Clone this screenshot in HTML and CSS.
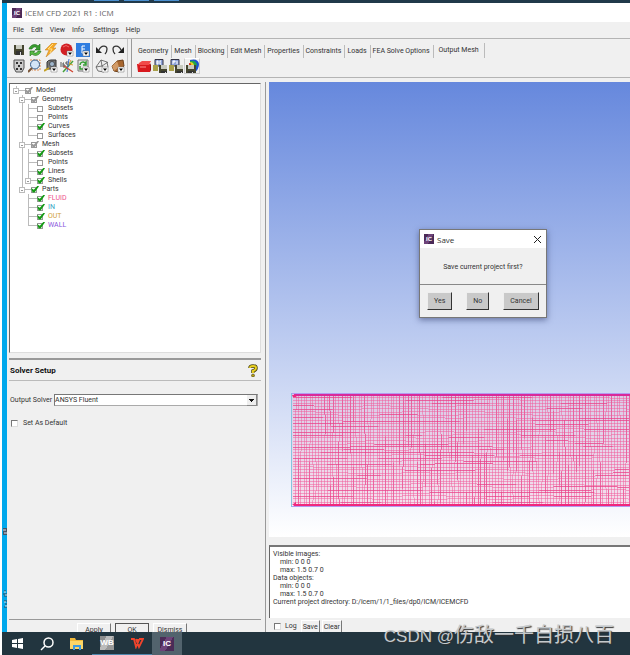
FILE: index.html
```html
<!DOCTYPE html>
<html lang="en">
<head>
<meta charset="UTF-8">
<title>ICEM CFD 2021 R1 : ICM</title>
<link rel="stylesheet" href="styles.css">
</head>
<body>

<svg class="defs" width="0" height="0">
  <symbol id="floppy" viewBox="0 0 14 14">
    <path d="M2 2h10v10H3L2 11z" fill="#45452f"/>
    <path d="M4 2h6v4H4z" fill="#c9cbc0"/>
    <path d="M4 8h6v4H4z" fill="#333"/>
    <path d="M8 9h1v3H8z" fill="#ddd"/>
  </symbol>
  <symbol id="drop" viewBox="0 0 14 14">
    <path d="M7 8h6v5H7z" fill="#fff" stroke="#777" stroke-width=".5"/>
    <path d="M8 9.500h4L10 12z" fill="#000"/>
  </symbol>
</svg>

<div class="desktop-top"><i></i><i></i><i></i></div>

<div class="desktop">
  <div class="desktop-edge">
    <svg width="5" height="8" viewBox="0 0 5 8"><path d="M1 0h4v7H1z" fill="#456"/><path d="M1 2h3M2 5h3" stroke="#dde"/></svg>
    <svg width="5" height="19" viewBox="0 0 5 19"><path d="M2 1h2M1 4h4M2 6h3M2 11h3M3 14h2M2 17h3" stroke="#345"/><path d="M2 2h2M3 5h2M2 12h2M3 16h2" stroke="#cde"/></svg>
  </div>

  <div class="window">
    <div class="titlebar"><span class="logo">IC</span>ICEM CFD 2021 R1 : ICM</div>

    <nav class="menu">
      <a href="#">File</a><a href="#">Edit</a><a href="#">View</a><a href="#">Info</a><a href="#" class="wide">Settings</a><a href="#">Help</a>
    </nav>

    <div class="toolbars">
      <div class="tools tools-main">
        <button aria-label="Save project"><svg viewBox="0 0 14 14"><use href="#floppy"/></svg></button>
        <button aria-label="Refresh"><svg viewBox="0 0 14 14"><path d="M1 6c1-4 6-6 9-3l2-2v6H7l2-2C7 3 5 4 4 6z" fill="#3a9e2f" stroke="#1d6a17" stroke-width=".6"/><path d="M13 8c-1 4-6 6-9 3l-2 2V8h5l-2 1c2 2 4 1 5-1z" fill="#58bb45" stroke="#1d6a17" stroke-width=".6"/></svg></button>
        <button aria-label="Compute"><svg viewBox="0 0 14 14"><path d="M8 0h5L9 5h3L2 14l3-7H1z" fill="#f7a823" stroke="#c98b34" stroke-width=".6"/><path d="M9 1 4 6h4l-2 4" fill="none" stroke="#ffe08a"/></svg></button>
        <button aria-label="Stop"><svg viewBox="0 0 14 14"><circle cx="6.500" cy="6.500" r="6" fill="#d21f24"/><path d="M3 4q3-3 6 0" fill="none" stroke="#ee6a6a"/><use href="#drop"/></svg></button>
        <button aria-label="Entities"><svg viewBox="0 0 14 14"><path d="M0 0h14v14H0z" fill="#2f7de0"/><path d="M9 3H6v7h3M6 6h3" fill="none" stroke="#fff"/><use href="#drop"/></svg></button>
        <button aria-label="Fit window"><svg viewBox="0 0 14 14"><path d="M2 1h10v8l-2 4H4L2 9z" fill="#ccc" stroke="#555"/><path d="M4 3h2v2H4zM8 3h2v2H8zM6 6h2v2H6zM4 9h2v2H4zM8 9h2v2H8z" fill="#333"/></svg></button>
        <button aria-label="Zoom box"><svg viewBox="0 0 14 14"><path d="M2 1h10v10H4" fill="none" stroke="#e08a4a" stroke-dasharray="2 1"/><circle cx="7" cy="5.500" r="4.500" fill="#d3e4f6" stroke="#345a86"/><path d="m4 9-4 4" stroke="#7a5638" stroke-width="2"/></svg></button>
        <button aria-label="Measure"><svg viewBox="0 0 14 14"><path d="M3 3q1-2 4-2h5v9H3z" fill="#777" stroke="#333"/><circle cx="8" cy="5" r="2.500" fill="#9fb6cc" stroke="#222" stroke-width=".6"/><path d="M0 12 5 9" stroke="#c4a127" stroke-width="2"/><use href="#drop"/></svg></button>
        <button aria-label="Local coordinates"><svg viewBox="0 0 14 14"><path d="M1 3v5M4 4H3v4h2V6H3M8 3H6v2h2v3H6" fill="none" stroke="#333" stroke-width=".8"/><path d="m3 13 10-11" stroke="#46a13a" stroke-width="1.500"/><path d="M9 0 7 13" stroke="#3b6ed0"/><path d="m4 7 9 6" stroke="#d04532" stroke-width="1.300"/><path d="m11 1-2 4 4 1" fill="none" stroke="#d09a32"/></svg></button>
        <button aria-label="Surface refresh"><svg viewBox="0 0 14 14"><path d="M2 1h10v11H2z" fill="#e4e8e4" stroke="#777"/><path d="M4 6c0-3 4-4 5-2l1-1v3H7M4 7v3h3" fill="none" stroke="#349c32" stroke-width="1.500"/><use href="#drop"/></svg></button>
      </div>
      <div class="tools tools-history">
        <button aria-label="Undo"><svg viewBox="0 0 14 14"><path d="M1 4v6h6z" fill="#222"/><path d="M4 7c2-5 8-5 8-1q0 3-2 5" fill="none" stroke="#333" stroke-width="1.300"/></svg></button>
        <button aria-label="Redo"><svg viewBox="0 0 14 14"><path d="M13 4v6H7z" fill="#222"/><path d="M10 7C8 2 2 2 2 6q0 3 2 5" fill="none" stroke="#333" stroke-width="1.300"/></svg></button>
        <button aria-label="Wireframe"><svg viewBox="0 0 14 14"><path d="M1 8 6 1l6 2 1 5-4 5-6-1zM1 8l6-1 6-4M7 7l-1-6M7 7l2 6" fill="#eee" stroke="#555" stroke-width=".8"/><use href="#drop"/></svg></button>
        <button aria-label="Solid"><svg viewBox="0 0 14 14"><path d="M1 7 6 2l6-1 1 6-5 6-5-1z" fill="#a8672f" stroke="#6f421b"/><path d="m1 7 5-5 2 6-5 4z" fill="#d29b67"/><use href="#drop"/></svg></button>
      </div>

      <div class="notebook">
        <div class="tabs">
          <button>Geometry</button><button>Mesh</button><button>Blocking</button><button>Edit Mesh</button><button>Properties</button><button>Constraints</button><button>Loads</button><button>FEA Solve Options</button><button class="current">Output Mesh</button>
        </div>
        <div class="tab-tools">
          <button aria-label="Select solver"><svg viewBox="0 0 14 14"><path d="M0 5h13v8H1z" fill="#d8191e"/><path d="m2 4 3-2h9l-2 4H1z" fill="#f14a4a"/><path d="M3 8h6" stroke="#ff8f8f"/><path d="m13 6 1-2v7l-1 2z" fill="#8d0d10"/></svg></button>
          <button aria-label="Boundary conditions"><svg viewBox="0 0 14 14"><path d="M2 .500h8V7H2z" fill="#8fa4d8" stroke="#334"/><path d="M4 2v3h1V2zM8 2H7v3h1" fill="none" stroke="#fff"/><path d="M0 6h5v6H0z" fill="#aaa14a"/><svg x="4" y="4" width="11" height="11"><use href="#floppy"/></svg></svg></button>
          <button aria-label="Edit parameters"><svg viewBox="0 0 14 14"><path d="M2 .500h8V7H2z" fill="#8fa4d8" stroke="#334"/><path d="M4 5V2h2v1H4M8 2v3" fill="none" stroke="#fff"/><path d="M0 6h5v6H0z" fill="#aaa14a"/><svg x="4" y="4" width="11" height="11"><use href="#floppy"/></svg></svg></button>
          <button aria-label="Write input" class="raised"><svg viewBox="0 0 14 14"><path d="M5 1q8-2 9 4 0 5-4 8L5 8z" fill="#1b4fd0"/><path d="M5 2q6-1 7 4l-3 5-4-4z" fill="#21a648"/><path d="M5 3q4 0 4 4L6 9z" fill="#e9d126"/><path d="M4 4q3 0 2 4H4z" fill="#d9301f"/><svg x="-1" y="4" width="11" height="11"><use href="#floppy"/></svg></svg></button>
        </div>
      </div>
    </div>

    <main class="work">
      <section class="left">
        <ul class="tree">
          <li><div class="row"><b></b><label><input type="checkbox" class="partial" checked>Model</label></div>
            <ul>
              <li><div class="row"><b></b><label><input type="checkbox" class="partial" checked>Geometry</label></div>
                <ul>
                  <li><div class="row"><label><input type="checkbox">Subsets</label></div></li>
                  <li><div class="row"><label><input type="checkbox">Points</label></div></li>
                  <li><div class="row"><label><input type="checkbox" checked>Curves</label></div></li>
                  <li><div class="row"><label><input type="checkbox">Surfaces</label></div></li>
                </ul>
              </li>
              <li><div class="row"><b></b><label><input type="checkbox" class="partial" checked>Mesh</label></div>
                <ul>
                  <li><div class="row"><label><input type="checkbox" checked>Subsets</label></div></li>
                  <li><div class="row"><label><input type="checkbox">Points</label></div></li>
                  <li><div class="row"><label><input type="checkbox" checked>Lines</label></div></li>
                  <li><div class="row"><b class="closed"></b><label><input type="checkbox" checked>Shells</label></div></li>
                </ul>
              </li>
              <li><div class="row"><b></b><label><input type="checkbox" checked>Parts</label></div>
                <ul>
                  <li><div class="row fluid"><label><input type="checkbox" checked>FLUID</label></div></li>
                  <li><div class="row in"><label><input type="checkbox" checked>IN</label></div></li>
                  <li><div class="row out"><label><input type="checkbox" checked>OUT</label></div></li>
                  <li><div class="row wall"><label><input type="checkbox" checked>WALL</label></div></li>
                </ul>
              </li>
            </ul>
          </li>
        </ul>

        <form class="solver">
          <div class="solver-head">
            <h2>Solver Setup</h2>
            <svg width="10" height="13" viewBox="0 0 10 13"><path d="M2 4q0-2 3-2t3 2q0 2-3 3v2" fill="none" stroke="#4a4310" stroke-width="3.500"/><path d="M2 4q0-2 3-2t3 2q0 2-3 3v2" fill="none" stroke="#e8cf1f" stroke-width="2"/><circle cx="5" cy="11.500" r="1.500" fill="#b59d17" stroke="#4a4310" stroke-width=".6"/></svg>
          </div>
          <div class="field">
            <label for="solver">Output Solver</label>
            <div class="select"><select id="solver"><option>ANSYS Fluent</option></select></div>
          </div>
          <label class="default"><input type="checkbox" class="box">Set As Default</label>
          <div class="actions">
            <button type="button">Apply</button><button type="button" class="ok">OK</button><button type="button">Dismiss</button>
          </div>
        </form>
      </section>

      <section class="right">
        <div class="viewport">
          <svg class="mesh" id="mesh"></svg>
          <div class="dialog" role="dialog" aria-labelledby="dialog-title">
            <div class="dialog-title">
              <span class="logo">IC</span>
              <span id="dialog-title">Save</span>
              <button aria-label="Close"><svg width="7" height="7" viewBox="0 0 7 7"><path d="m0 0 7 7M7 0 0 7" stroke="#222"/></svg></button>
            </div>
            <p>Save current project first?</p>
            <div class="dialog-buttons"><button>Yes</button><button>No</button><button>Cancel</button></div>
          </div>
        </div>
        <pre class="log">Visible images:
    min: 0 0 0
    max: 1.5 0.7 0
Data objects:
    min: 0 0 0
    max: 1.5 0.7 0
Current project directory: D:/icem/1/1_files/dp0/ICM/ICEMCFD</pre>
        <div class="log-bar">
          <label><input type="checkbox" class="box">Log</label><button>Save</button><button>Clear</button>
        </div>
      </section>
    </main>
  </div>
</div>

<footer class="taskbar">
  <button aria-label="Start"><svg width="11" height="11" viewBox="0 0 11 11"><path d="m0 2 5-1v4H0zM6 1l5-1v5H6zM0 6h5v4L0 9zM6 6h5v5l-5-1z" fill="#fff"/></svg></button>
  <button aria-label="Search"><svg width="14" height="14" viewBox="0 0 14 14"><circle cx="8.500" cy="5.500" r="4.500" fill="none" stroke="#fff" stroke-width="1.500"/><path d="m5 9-4 4" stroke="#fff" stroke-width="1.500"/></svg></button>
  <button aria-label="Explorer"><svg width="14" height="12" viewBox="0 0 14 12"><path d="M0 0h5l1 2h7v9H0z" fill="#f0b93a"/><path d="M0 3h13v8H0z" fill="#fbd667"/><path d="M3 7h8v5H9V9H5v3H3z" fill="#3d9be0"/></svg></button>
  <button aria-label="Workbench" class="running"><span class="logo large wb">WB</span></button>
  <button aria-label="WPS" class="running"><svg width="14" height="11" viewBox="0 0 14 11"><path d="M1 1h3l2 8 3-7h-3M6 1l3 8 4-8H9" fill="none" stroke="#f0442c" stroke-width="1.800"/></svg></button>
  <button aria-label="ICEM CFD" class="active"><span class="logo large">IC</span></button>
</footer>

<div class="watermark">CSDN @<span>伤敌一千自损八百</span></div>

<script src="script.js"></script>
</body>
</html>
```

FILE: styles.css
```css
* {
  box-sizing: border-box;
}

body {
  margin: 0;
  padding-left: 2px;
  height: 100vh;
  display: flex;
  flex-direction: column;
  overflow: hidden;
  background: #fff;
  font-family: Roboto, "Liberation Sans", sans-serif;
  font-size: 7px;
  line-height: 9px;
  color: #333;
}

button, select, input {
  margin: 0;
  padding: 0;
  border: 0;
  background: none;
  font: inherit;
  color: inherit;
}

ul, p, h2, pre {
  margin: 0;
  padding: 0;
  list-style: none;
}

svg {
  display: block;
}

.defs {
  position: absolute;
}

.logo {
  width: 10px;
  height: 10px;
  background: linear-gradient(120deg, #4b2a57 30%, #6d4379 30% 60%, #4b2a57 60%);
  font: bold 6px/10px "Liberation Sans", sans-serif;
  text-align: center;
  color: #fff;
}

.logo.large {
  width: 14px;
  height: 14px;
  font-size: 8px;
  line-height: 14px;
}

.logo.wb {
  background: linear-gradient(120deg, #8d8d8d 30%, #bbb 30% 60%, #999 60%);
}

.desktop-top {
  display: flex;
  gap: 5px;
  height: 3px;
  padding-left: 92px;
  background: #20394a;
}

.desktop-top i {
  width: 25px;
  height: 1px;
  background: #4a8fd0;
}

.desktop {
  flex: 1;
  min-height: 0;
  display: flex;
}

.desktop-edge {
  width: 5px;
  background: #00a8ec;
  display: flex;
  flex-direction: column;
  justify-content: flex-end;
  gap: 54px;
  padding-bottom: 23px;
}

.window {
  flex: 1;
  min-width: 0;
  display: flex;
  flex-direction: column;
  background: #f0f0f0;
}

.titlebar {
  display: flex;
  align-items: center;
  gap: 3px;
  height: 19px;
  padding-left: 5px;
  background: #fff;
  font-family: "Open Sans", sans-serif;
  font-size: 8px;
  color: #666;
}

.menu {
  display: flex;
  align-items: center;
  gap: 7px;
  height: 16px;
  padding-left: 6px;
}

.menu a {
  color: inherit;
  text-decoration: none;
}

.menu .wide {
  margin-left: 2px;
}

/* toolbars */

.toolbars {
  display: flex;
  height: 40px;
  border-top: 1px solid #b4b4b4;
  border-bottom: 1px solid #b4b4b4;
}

.tools {
  display: grid;
  grid-auto-rows: 16px;
  align-content: center;
  border-right: 1px solid #c4c4c4;
}

.tools-main {
  grid-template-columns: repeat(5, 16px);
  padding: 0 1px 0 4px;
}

.tools-history {
  grid-template-columns: repeat(2, 16px);
  padding: 0 1px;
}

.tools button, .tab-tools button {
  display: grid;
  place-items: center;
  width: 16px;
  height: 16px;
}

.tools svg, .tab-tools svg {
  width: 14px;
  height: 14px;
}

.notebook {
  flex: 1;
  margin-left: 3px;
  border-left: 1px solid #999;
  padding: 3px 0 0 4px;
}

.tabs {
  display: flex;
  align-items: flex-end;
  height: 16px;
}

.tabs button {
  height: 13px;
  padding: 0 3px 0 2px;
  border-right: 1px solid #bbb;
  white-space: nowrap;
}

.tabs .current {
  height: 15px;
  padding: 0 5px;
}

.tab-tools {
  display: flex;
}

.tab-tools .raised {
  border: 1px solid #ccc;
  border-top-color: #fff;
}

/* work area */

.work {
  flex: 1;
  min-height: 0;
  display: flex;
  padding-top: 4px;
}

.left {
  flex: 0 1 259px;
  display: flex;
  flex-direction: column;
  border-right: 1px solid #999;
  padding: 1px 4px 0 2px;
}

.tree {
  flex: 0 0 270px;
  padding: 2px 3px;
  background: #fff;
  border: 1px solid #ddd;
  border-top-color: #666;
  border-left-color: #666;
}

.tree ul {
  padding-left: 6px;
}

.tree li {
  background: linear-gradient(#bbb, #bbb) 3px 0 / 1px 100% no-repeat;
}

.tree li:last-child {
  background-size: 1px 4px;
}

.row {
  display: flex;
  height: 9px;
  background: linear-gradient(#bbb, #bbb) 3px 4px / 9px 1px no-repeat;
}

.row b {
  width: 6px;
  height: 6px;
  margin: 2px 6px 0 0;
  border: 1px solid #bbb;
  background: linear-gradient(#999, #999) center / 2px 1px no-repeat #fff;
}

.row b + label {
  margin-left: 0;
}

.row label {
  display: flex;
  align-items: center;
  gap: 5px;
  height: 9px;
  margin-left: 12px;
}

.row input {
  appearance: none;
  position: relative;
  width: 6px;
  height: 6px;
  border: 1px solid #999;
  background: #fff;
}

.row input:checked::after {
  content: "";
  position: absolute;
  left: -1px;
  top: -2px;
  width: 8px;
  height: 7px;
  background: #149a14;
  clip-path: polygon(0 35%, 35% 60%, 85% 0, 100% 10%, 45% 100%, 20% 100%);
}

.row .partial:checked::after {
  background: #999;
}

.fluid { color: #ee4f8c; }
.in { color: #35a3c4; }
.out { color: #d0a038; }
.wall { color: #8855dd; }

/* solver panel */

.solver {
  flex: 1;
  min-height: 0;
  display: flex;
  flex-direction: column;
  margin-top: 5px;
  border-top: 2px solid #999;
}

.solver-head {
  display: flex;
  align-items: center;
  justify-content: space-between;
  height: 21px;
  padding: 0 3px 0 1px;
  border-bottom: 1px solid #bbb;
}

.solver h2 {
  font-size: 8px;
  color: #111;
}

.field {
  display: flex;
  align-items: center;
  gap: 2px;
  margin: 13px 3px 0 1px;
}

.select {
  flex: 1;
  display: flex;
  position: relative;
}

.select select {
  flex: 1;
  appearance: none;
  height: 12px;
  background: #fff;
  border: 1px solid #aaa;
  border-top-color: #777;
  border-left-color: #777;
}

.select::after {
  content: "";
  position: absolute;
  right: 1px;
  top: 1px;
  width: 9px;
  height: 10px;
  background: linear-gradient(#111, #111) center 4px / 5px 1px no-repeat,
    linear-gradient(#111, #111) center 5px / 3px 1px no-repeat,
    linear-gradient(#111, #111) center 6px / 1px 1px no-repeat #eee;
  border-right: 1px solid #888;
  border-bottom: 1px solid #888;
  pointer-events: none;
}

.default {
  display: flex;
  align-items: center;
  gap: 5px;
  margin: 13px 0 0 2px;
}

.box {
  appearance: none;
  width: 7px;
  height: 7px;
  background: #fff;
  border: 1px solid #ddd;
  border-top-color: #777;
  border-left-color: #777;
}

.actions {
  display: flex;
  gap: 4px;
  height: 13px;
  margin-top: auto;
  padding: 3px 0 0 68px;
  border-top: 1px solid #999;
  overflow: hidden;
}

.actions button {
  width: 34px;
  height: 14px;
  border: 1px solid #fff;
  border-right-color: #777;
}

.actions .ok {
  border-color: #555;
}

/* graphics window */

.right {
  flex: 1;
  min-width: 0;
  display: flex;
  flex-direction: column;
  padding-left: 3px;
}

.viewport {
  flex: 1;
  min-height: 0;
  position: relative;
  display: flex;
  align-items: flex-end;
  padding: 0 0 30px 22px;
  background: linear-gradient(#6688dd, #fff);
}

.mesh {
  flex: 1;
  width: 100%;
  height: 114px;
}

.dialog {
  position: absolute;
  left: 150px;
  top: 147px;
  background: #f0f0f0;
  border: 1px solid #777;
  box-shadow: 0 2px 6px rgba(30, 40, 90, 0.5);
}

.dialog-title {
  display: flex;
  align-items: center;
  gap: 3px;
  height: 18px;
  padding: 0 5px 0 4px;
  background: #fff;
  font-family: "Open Sans", sans-serif;
  font-size: 8px;
}

.dialog-title button {
  margin-left: auto;
}

.dialog p {
  height: 37px;
  line-height: 38px;
  text-align: center;
  border-bottom: 1px solid #888;
}

.dialog-buttons {
  display: flex;
  gap: 14px;
  padding: 7px;
}

.dialog-buttons button {
  height: 18px;
  padding: 0 6px;
  background: #c9c9c9;
  border: 1px solid #eee;
  border-right-color: #333;
  border-bottom-color: #333;
}

.log {
  height: 73px;
  margin-top: 8px;
  padding: 3px;
  font: inherit;
  line-height: 8px;
  background: #fff;
  border-top: 2px solid #777;
  border-left: 1px solid #666;
}

.log-bar {
  display: flex;
  align-items: flex-start;
  gap: 2px;
  height: 14px;
  padding: 2px 0 0 5px;
  overflow: hidden;
}

.log-bar label {
  display: flex;
  align-items: center;
  gap: 4px;
  height: 12px;
  padding-right: 2px;
}

.log-bar button {
  height: 14px;
  padding: 0 1px;
  border: 1px solid #fff;
  border-right-color: #777;
}

/* taskbar */

.taskbar {
  flex: 0 0 23px;
  display: flex;
  background: #22353f;
}

.taskbar button {
  display: grid;
  place-items: center;
  width: 30px;
}

.taskbar .running {
  border-bottom: 1px solid #4f87ad;
}

.taskbar .active {
  background: #52636d;
}

.watermark {
  position: absolute;
  right: 16px;
  bottom: 4px;
  font-family: "Liberation Sans", "Noto Sans CJK SC", sans-serif;
  font-size: 17px;
  line-height: 28px;
  color: #c4c9cc;
  text-shadow: 1px 1px 1px #333;
}

.watermark span {
  font-family: "Noto Sans CJK SC", sans-serif;
  font-size: 20px;
}
```

FILE: script.js
```js
// draws the quad surface mesh: two families of slightly broken grid lines
const svg = document.getElementById('mesh');
const W = Math.max(svg.clientWidth, 340);
const H = 114;
let seed = 7;

function rnd() {
  seed = (seed * 16807) % 2147483647;
  return seed / 2147483647;
}

function lines(length, across, vertical) {
  let light = '';
  let dark = '';
  for (let p = 4; p < across - 2; p += 2.9) {
    let at = 2;
    while (at < length - 2) {
      const end = Math.min(length - 2, at + 15 + rnd() * 60);
      const pos = Math.round(p + (rnd() - 0.5) * 1.2);
      const d = vertical ? `M${pos + 0.5} ${at}V${end}` : `M${at} ${pos + 0.5}H${end}`;
      if (rnd() < 0.25) dark += d;
      else light += d;
      at = end;
    }
  }
  return `<path d="${light}" stroke="#f25a9a" stroke-opacity=".5"/>` +
    `<path d="${dark}" stroke="#ea4088" stroke-opacity=".75"/>`;
}

svg.innerHTML =
  `<rect x="1" y="1" width="${W}" height="${H - 3}" fill="#f6a8c8" fill-opacity=".3"/>` +
  lines(H, W, true) + lines(W, H, false) +
  `<path d="M0 .5H${W}M0 ${H - 0.5}H${W}" stroke="#b59af0"/>` +
  `<path d="M.5 0V${H}" stroke="#86c5e0"/>` +
  `<path d="M3 2H${W}" stroke="#d92a9a" stroke-width="2"/>` +
  `<path d="M3 ${H - 2}H${W}" stroke="#f0287e" stroke-width="2"/>` +
  `<path d="M1 2h4v2H2zM1 ${H - 2}h4v-3z" fill="#f0287e"/>`;
```
